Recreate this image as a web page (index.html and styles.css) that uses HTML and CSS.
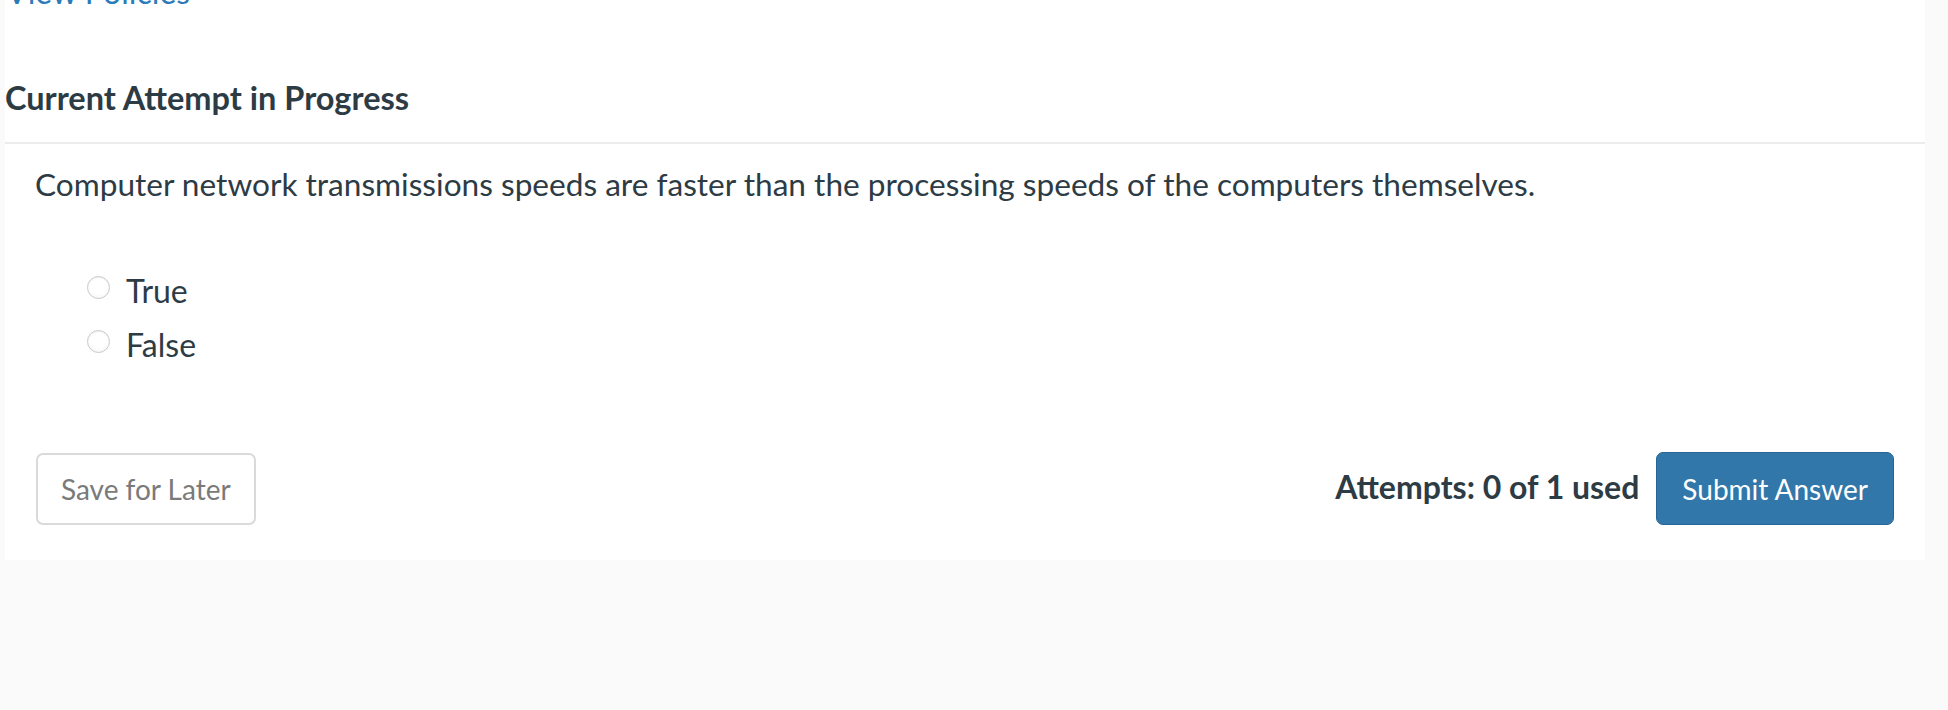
FILE: index.html
```html
<!DOCTYPE html>
<html lang="en">
<head>
<meta charset="utf-8">
<title>Current Attempt in Progress</title>
<link rel="stylesheet" href="styles.css">
</head>
<body>
<main class="card">
  <a class="policies" href="#">View Policies</a>
  <h2 class="attempt-title">Current Attempt in Progress</h2>
  <section class="question">
    <p class="question-text">Computer network transmissions speeds are faster than the processing speeds of the computers themselves.</p>
    <ul class="choices">
      <li class="choice"><span class="radio"></span><span class="choice-label">True</span></li>
      <li class="choice"><span class="radio"></span><span class="choice-label">False</span></li>
    </ul>
  </section>
  <footer class="actions">
    <button class="btn btn-save" type="button">Save for Later</button>
    <div class="submit-group">
      <span class="attempts">Attempts: 0 of 1 used</span>
      <button class="btn btn-submit" type="button">Submit Answer</button>
    </div>
  </footer>
</main>
</body>
</html>
```
FILE: styles.css
```css
html, body {
  margin: 0;
  padding: 0;
  background: #fafafa;
}
body {
  font-family: Lato, "Open Sans", sans-serif;
  color: #2d3b45;
  overflow: hidden;
}
.card {
  display: block;
  margin-left: 5px;
  width: 1920px;
  background: #ffffff;
  padding-bottom: 35px;
}
.policies {
  display: block;
  width: max-content;
  margin-top: -27px;
  font-size: 32px;
  line-height: 38px;
  color: #2b7bb9;
  text-decoration: none;
  padding-left: 1px;
}
.attempt-title {
  margin: 68px 0 0 0;
  font-size: 32.5px;
  font-weight: 700;
  line-height: 38px;
  padding-bottom: 25px;
  border-bottom: 2px solid #ececec;
}
.question {
  padding: 16px 30px 0 30px;
}
.question-text {
  margin: 0;
  font-size: 31.6px;
  line-height: 48px;
}
.choices {
  list-style: none;
  margin: 56px 0 0 0;
  padding: 0 0 0 52px;
}
.choice {
  display: flex;
  align-items: center;
  height: 54px;
  font-size: 32px;
  line-height: 54px;
}
.radio {
  width: 21px;
  height: 21px;
  border-radius: 50%;
  border: 1.5px solid #c9c9c9;
  background: radial-gradient(circle at 50% 35%, #ffffff 55%, #f1f1f1 100%);
  box-shadow: inset 0 1px 1px rgba(0,0,0,0.06);
  margin-top: -8px;
  flex: none;
}
.choice-label {
  margin-left: 16px;
}
.actions {
  display: flex;
  justify-content: space-between;
  align-items: center;
  margin-top: 80px;
  padding: 0 31px;
}
.btn {
  font-family: Lato, "Open Sans", sans-serif;
  font-size: 28px;
  height: 73px;
  border-radius: 7px;
  cursor: pointer;
}
.btn-save {
  background: #ffffff;
  color: #7a7a7a;
  border: 2px solid #dadada;
  padding: 0 23px;
  height: 72px;
  margin-top: 1px;
}
.submit-group {
  display: flex;
  align-items: center;
  gap: 17px;
}
.attempts {
  font-size: 32px;
  font-weight: 700;
  color: #2d3b45;
  margin-top: -4px;
}
.btn-submit {
  background: #3277a9;
  color: #ffffff;
  border: 1.5px solid #286596;
  padding: 0 25px;
}
```
